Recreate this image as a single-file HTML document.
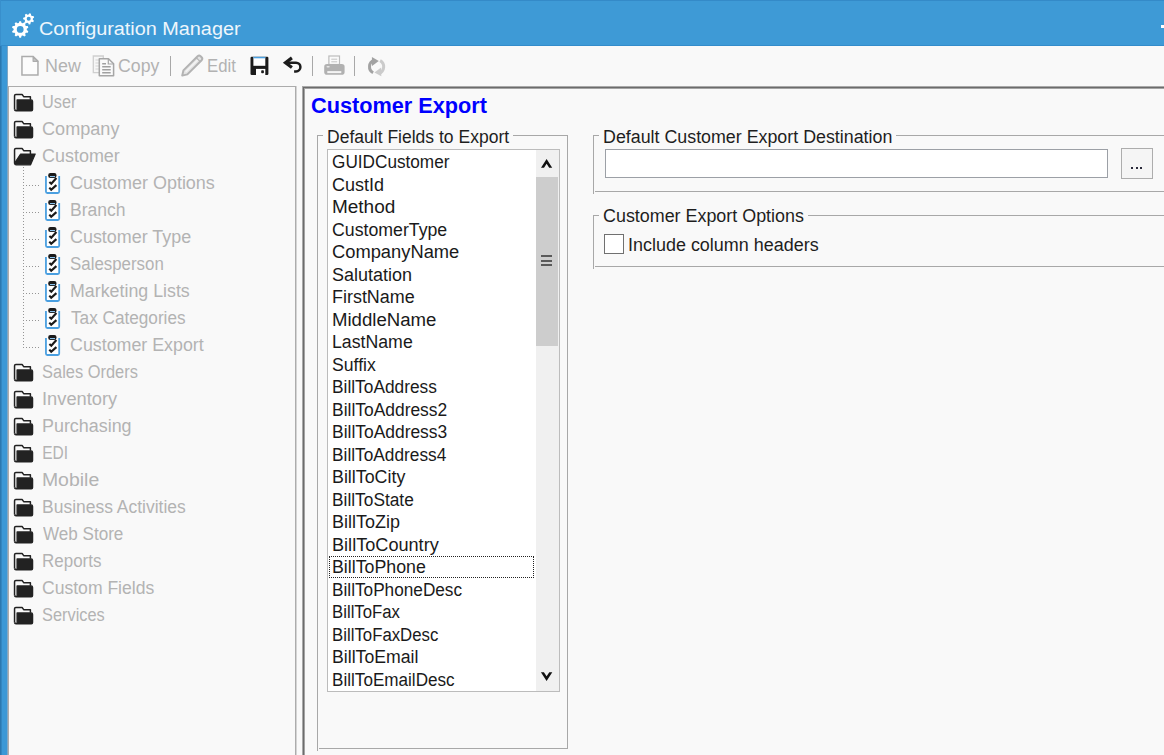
<!DOCTYPE html>
<html><head><meta charset="utf-8">
<style>
*{margin:0;padding:0;box-sizing:border-box}
html,body{width:1164px;height:755px;overflow:hidden;background:#f9f9f9;font-family:"Liberation Sans",sans-serif;position:relative}
.a{position:absolute;display:block}
.t{position:absolute;white-space:nowrap;line-height:30px;height:30px}
</style></head><body>
<div class="a" style="left:0;top:0;width:1164px;height:46px;background:#3e9ad6"></div>
<div class="a" style="left:0;top:0;width:1164px;height:1px;background:#348ac8"></div>
<div class="a" style="left:0;top:0;width:1px;height:46px;background:#388fcc"></div>
<div class="a" style="left:0;top:45px;width:1164px;height:1px;background:#338ccb"></div>
<svg class="a" style="left:0;top:0" width="40" height="46"><path fill="#fff" fill-rule="evenodd" d="M26.77,30.06 L28.31,31.16 L27.80,32.74 L25.90,32.72 L25.13,33.79 L25.73,35.59 L24.38,36.57 L22.86,35.44 L21.60,35.85 L21.04,37.66 L19.37,37.66 L18.80,35.85 L17.54,35.44 L16.02,36.57 L14.68,35.59 L15.28,33.80 L14.50,32.73 L12.61,32.75 L12.09,31.16 L13.63,30.07 L13.63,28.74 L12.09,27.64 L12.60,26.06 L14.50,26.08 L15.27,25.01 L14.67,23.21 L16.02,22.23 L17.54,23.36 L18.80,22.95 L19.36,21.14 L21.03,21.14 L21.60,22.95 L22.86,23.36 L24.38,22.23 L25.72,23.21 L25.12,25.00 L25.90,26.07 L27.79,26.05 L28.31,27.64 L26.77,28.73Z M23.60,29.40 A3.4,3.4 0 1 0 16.80,29.40 A3.4,3.4 0 1 0 23.60,29.40Z M32.82,19.63 L33.94,20.78 L33.16,22.18 L31.59,21.84 L30.61,22.54 L30.42,24.13 L28.84,24.40 L28.13,22.96 L26.97,22.63 L25.60,23.47 L24.41,22.40 L25.09,20.95 L24.63,19.83 L23.12,19.29 L23.21,17.69 L24.77,17.31 L25.35,16.26 L24.84,14.74 L26.15,13.82 L27.41,14.80 L28.60,14.60 L29.47,13.25 L31.01,13.70 L31.02,15.30 L31.92,16.10 L33.51,15.94 L34.13,17.42 L32.88,18.43Z M30.70,18.80 A2.0,2.0 0 1 0 26.70,18.80 A2.0,2.0 0 1 0 30.70,18.80Z"/></svg>
<div class="a" style="left:1161px;top:25px;width:3px;height:3px;background:#fff"></div>
<div class="a" style="left:0;top:46px;width:7px;height:709px;background:#3b98d6"></div>
<div class="a" style="left:0;top:46px;width:1px;height:709px;background:#2a78b0"></div>
<div class="a" style="left:1px;top:46px;width:1px;height:709px;background:#3386c0"></div>
<div class="a" style="left:7px;top:46px;width:1157px;height:39px;background:#f9f9f9"></div>
<svg class="a" style="left:20px;top:55px" width="21" height="23" viewBox="0 0 21 23">
<path d="M1.95,1.55 H13.1 L17.95,6.3 V20.05 H1.95 Z" fill="#fcfcfc" stroke="#acacac" stroke-width="1.5" stroke-linejoin="miter"/>
<path d="M13.1,1.6 V6.3 H17.9 Z" fill="#c4c4c4" stroke="#acacac" stroke-width="1.2" stroke-linejoin="round"/>
</svg>
<svg class="a" style="left:92px;top:55px" width="24" height="23" viewBox="0 0 24 23">
<path d="M1.3,1 H11.3 V17.7 H1.3 Z" fill="#f6f6f6" stroke="#cfcfcf" stroke-width="1.3"/>
<path d="M3.5,5 H8 M3.5,8 H8 M3.5,11 H8 M3.5,14 H8" stroke="#d4d4d4" stroke-width="1.2"/>
<path d="M7.3,3.7 H16.5 L21.6,8.8 V20.8 H7.3 Z" fill="#fafafa" stroke="#a6a6a6" stroke-width="1.5" stroke-linejoin="round"/>
<path d="M16.3,3.9 V9 H21.4" fill="none" stroke="#a6a6a6" stroke-width="1.2"/>
<path d="M10.2,8.8 H14 M10.2,11.8 H18.7 M10.2,14.7 H18.7 M10.2,17.7 H18.7" stroke="#a0a0a0" stroke-width="1.4"/>
</svg>
<div class="a" style="left:170px;top:56px;width:1px;height:20px;background:#a8a8a8"></div>
<svg class="a" style="left:180px;top:54px" width="24" height="24" viewBox="0 0 24 24">
<path d="M2.2,21.6 L3.4,16.4 L17.6,2.2 Q19.1,0.8 20.6,2.2 L21.6,3.2 Q23.0,4.7 21.6,6.2 L7.4,20.4 Z" fill="#e4e4e4" stroke="#b3b3b3" stroke-width="2.0" stroke-linejoin="round"/>
<path d="M5.8,17.8 L18.4,5.2" stroke="#f4f4f4" stroke-width="1.6"/>
<path d="M16.2,3.6 L20.2,7.6" stroke="#b3b3b3" stroke-width="1.2"/>
</svg>
<svg class="a" style="left:250px;top:56px" width="20" height="20" viewBox="0 0 20 20">
<rect x="0.5" y="0.8" width="17.9" height="18.1" rx="1.2" fill="#1c1c1c"/>
<rect x="3.4" y="0.8" width="11.9" height="9.0" fill="#ffffff"/>
<rect x="3.4" y="0.8" width="11.9" height="1.5" fill="#4aa0e0"/>
<rect x="6.0" y="12.9" width="9.3" height="6.1" fill="#ffffff"/>
<rect x="11.2" y="14.3" width="2.7" height="3.0" rx="0.8" fill="#1c1c1c"/>
</svg>
<svg class="a" style="left:282px;top:55px" width="22" height="20" viewBox="0 0 22 20">
<path d="M4.0,7.7 H14 A4.4,4.4 0 0 1 14,16.5 H12.1" fill="none" stroke="#1c1c1c" stroke-width="2.5"/>
<path d="M9.9,2.9 L3.5,7.7 L9.9,12.6" fill="none" stroke="#1c1c1c" stroke-width="3.2" stroke-linejoin="miter" stroke-miterlimit="3"/>
</svg>
<div class="a" style="left:312px;top:56px;width:1px;height:20px;background:#a8a8a8"></div>
<svg class="a" style="left:322px;top:54px" width="25" height="23" viewBox="0 0 25 23">
<rect x="6.9" y="2.0" width="10.6" height="8.5" fill="#fafafa" stroke="#bcbcbc" stroke-width="1.2"/>
<path d="M9.3,5.2 H15.2 M9.3,7.8 H15.2" stroke="#c2c2c2" stroke-width="1.0"/>
<rect x="2.2" y="10.1" width="20.4" height="10.6" rx="2.8" fill="#b1b1b1"/>
<rect x="5.3" y="17.1" width="14.0" height="2.0" fill="#f4f4f4"/>
<rect x="4.5" y="12.0" width="3.2" height="1.5" rx="0.7" fill="#e4e4e4"/>
</svg>
<div class="a" style="left:354px;top:56px;width:1px;height:20px;background:#a8a8a8"></div>
<svg class="a" style="left:365px;top:55px" width="23" height="23" viewBox="0 0 23 23">
<g><path d="M8.1,17.8 A7,7 0 0 1 9.2,5.1" fill="none" stroke="#a2a2a2" stroke-width="3"/>
<path d="M13.8,5.9 L6.9,2.1 L7.0,10.9 Z" fill="#a2a2a2"/></g>
<g transform="rotate(180 11.6 11.7)"><path d="M8.1,17.8 A7,7 0 0 1 9.2,5.1" fill="none" stroke="#cbcbcb" stroke-width="3"/>
<path d="M13.8,5.9 L6.9,2.1 L7.0,10.9 Z" fill="#cbcbcb"/></g>
</svg>
<div class="a" style="left:8px;top:86px;width:288px;height:680px;background:#f9f9f9;border:1px solid #acacac"></div>
<div class="a" style="left:296px;top:86px;width:1px;height:680px;background:#d4d4d4"></div>
<div class="a" style="left:7px;top:46px;width:1px;height:709px;background:#7ea6c4"></div>
<svg class="a" style="left:13px;top:92.5px" width="21" height="20" viewBox="0 0 21 20">
<path d="M1.55,16.6 V2.8 Q1.55,1.55 2.8,1.55 H9.1 L10.9,3.85 H17.4 V6.8" fill="none" stroke="#222" stroke-width="1.5" stroke-linejoin="round"/>
<path d="M1.55,16.4 Q1.55,17.9 3.0,17.9 H18.4 Q19.6,17.9 19.6,16.6 V8.4 Q19.6,6.9 18.2,6.9 H4.1 V16.6" fill="#222" stroke="#222" stroke-width="1.3" stroke-linejoin="round"/>
</svg>
<svg class="a" style="left:13px;top:119.5px" width="21" height="20" viewBox="0 0 21 20">
<path d="M1.55,16.6 V2.8 Q1.55,1.55 2.8,1.55 H9.1 L10.9,3.85 H17.4 V6.8" fill="none" stroke="#222" stroke-width="1.5" stroke-linejoin="round"/>
<path d="M1.55,16.4 Q1.55,17.9 3.0,17.9 H18.4 Q19.6,17.9 19.6,16.6 V8.4 Q19.6,6.9 18.2,6.9 H4.1 V16.6" fill="#222" stroke="#222" stroke-width="1.3" stroke-linejoin="round"/>
</svg>
<svg class="a" style="left:13px;top:146.5px" width="23" height="20" viewBox="0 0 23 20">
<path d="M1.55,16.6 V2.8 Q1.55,1.55 2.8,1.55 H9.1 L10.9,3.85 H17.4 V7" fill="none" stroke="#222" stroke-width="1.5" stroke-linejoin="round"/>
<path d="M1.6,16.2 Q1.6,17.8 3.1,17.8 H17.6 L22.2,7.0 H7.6 Z" fill="#222" stroke="#222" stroke-width="1.2" stroke-linejoin="round"/>
</svg>
<svg class="a" style="left:44px;top:172px" width="18" height="23" viewBox="0 0 18 23">
<path d="M1.95,3.9 V19.6 Q1.95,21.0 3.3,21.0 H13.9 Q15.2,21.0 15.2,19.6 V3.9" fill="#fff" stroke="#4a9fe0" stroke-width="1.8"/>
<rect x="4.2" y="1.1" width="8.3" height="4.8" rx="2.2" fill="#1a1a1a"/>
<rect x="6" y="4.0" width="5" height="1.1" fill="#8ac2ec"/>
<path d="M5.4,10.0 L7.3,11.8 L12.4,6.0" fill="none" stroke="#1a1a1a" stroke-width="2.1"/>
<path d="M5.3,15.6 L7.2,17.8 L12.4,13.1" fill="none" stroke="#1a1a1a" stroke-width="2.1"/>
</svg>
<div class="a" style="left:23px;top:185px;width:16px;height:1px;background:repeating-linear-gradient(90deg,#959595 0 1px,transparent 1px 3px)"></div>
<svg class="a" style="left:44px;top:199px" width="18" height="23" viewBox="0 0 18 23">
<path d="M1.95,3.9 V19.6 Q1.95,21.0 3.3,21.0 H13.9 Q15.2,21.0 15.2,19.6 V3.9" fill="#fff" stroke="#4a9fe0" stroke-width="1.8"/>
<rect x="4.2" y="1.1" width="8.3" height="4.8" rx="2.2" fill="#1a1a1a"/>
<rect x="6" y="4.0" width="5" height="1.1" fill="#8ac2ec"/>
<path d="M5.4,10.0 L7.3,11.8 L12.4,6.0" fill="none" stroke="#1a1a1a" stroke-width="2.1"/>
<path d="M5.3,15.6 L7.2,17.8 L12.4,13.1" fill="none" stroke="#1a1a1a" stroke-width="2.1"/>
</svg>
<div class="a" style="left:23px;top:212px;width:16px;height:1px;background:repeating-linear-gradient(90deg,#959595 0 1px,transparent 1px 3px)"></div>
<svg class="a" style="left:44px;top:226px" width="18" height="23" viewBox="0 0 18 23">
<path d="M1.95,3.9 V19.6 Q1.95,21.0 3.3,21.0 H13.9 Q15.2,21.0 15.2,19.6 V3.9" fill="#fff" stroke="#4a9fe0" stroke-width="1.8"/>
<rect x="4.2" y="1.1" width="8.3" height="4.8" rx="2.2" fill="#1a1a1a"/>
<rect x="6" y="4.0" width="5" height="1.1" fill="#8ac2ec"/>
<path d="M5.4,10.0 L7.3,11.8 L12.4,6.0" fill="none" stroke="#1a1a1a" stroke-width="2.1"/>
<path d="M5.3,15.6 L7.2,17.8 L12.4,13.1" fill="none" stroke="#1a1a1a" stroke-width="2.1"/>
</svg>
<div class="a" style="left:23px;top:239px;width:16px;height:1px;background:repeating-linear-gradient(90deg,#959595 0 1px,transparent 1px 3px)"></div>
<svg class="a" style="left:44px;top:253px" width="18" height="23" viewBox="0 0 18 23">
<path d="M1.95,3.9 V19.6 Q1.95,21.0 3.3,21.0 H13.9 Q15.2,21.0 15.2,19.6 V3.9" fill="#fff" stroke="#4a9fe0" stroke-width="1.8"/>
<rect x="4.2" y="1.1" width="8.3" height="4.8" rx="2.2" fill="#1a1a1a"/>
<rect x="6" y="4.0" width="5" height="1.1" fill="#8ac2ec"/>
<path d="M5.4,10.0 L7.3,11.8 L12.4,6.0" fill="none" stroke="#1a1a1a" stroke-width="2.1"/>
<path d="M5.3,15.6 L7.2,17.8 L12.4,13.1" fill="none" stroke="#1a1a1a" stroke-width="2.1"/>
</svg>
<div class="a" style="left:23px;top:266px;width:16px;height:1px;background:repeating-linear-gradient(90deg,#959595 0 1px,transparent 1px 3px)"></div>
<svg class="a" style="left:44px;top:280px" width="18" height="23" viewBox="0 0 18 23">
<path d="M1.95,3.9 V19.6 Q1.95,21.0 3.3,21.0 H13.9 Q15.2,21.0 15.2,19.6 V3.9" fill="#fff" stroke="#4a9fe0" stroke-width="1.8"/>
<rect x="4.2" y="1.1" width="8.3" height="4.8" rx="2.2" fill="#1a1a1a"/>
<rect x="6" y="4.0" width="5" height="1.1" fill="#8ac2ec"/>
<path d="M5.4,10.0 L7.3,11.8 L12.4,6.0" fill="none" stroke="#1a1a1a" stroke-width="2.1"/>
<path d="M5.3,15.6 L7.2,17.8 L12.4,13.1" fill="none" stroke="#1a1a1a" stroke-width="2.1"/>
</svg>
<div class="a" style="left:23px;top:293px;width:16px;height:1px;background:repeating-linear-gradient(90deg,#959595 0 1px,transparent 1px 3px)"></div>
<svg class="a" style="left:44px;top:307px" width="18" height="23" viewBox="0 0 18 23">
<path d="M1.95,3.9 V19.6 Q1.95,21.0 3.3,21.0 H13.9 Q15.2,21.0 15.2,19.6 V3.9" fill="#fff" stroke="#4a9fe0" stroke-width="1.8"/>
<rect x="4.2" y="1.1" width="8.3" height="4.8" rx="2.2" fill="#1a1a1a"/>
<rect x="6" y="4.0" width="5" height="1.1" fill="#8ac2ec"/>
<path d="M5.4,10.0 L7.3,11.8 L12.4,6.0" fill="none" stroke="#1a1a1a" stroke-width="2.1"/>
<path d="M5.3,15.6 L7.2,17.8 L12.4,13.1" fill="none" stroke="#1a1a1a" stroke-width="2.1"/>
</svg>
<div class="a" style="left:23px;top:320px;width:16px;height:1px;background:repeating-linear-gradient(90deg,#959595 0 1px,transparent 1px 3px)"></div>
<svg class="a" style="left:44px;top:334px" width="18" height="23" viewBox="0 0 18 23">
<path d="M1.95,3.9 V19.6 Q1.95,21.0 3.3,21.0 H13.9 Q15.2,21.0 15.2,19.6 V3.9" fill="#fff" stroke="#4a9fe0" stroke-width="1.8"/>
<rect x="4.2" y="1.1" width="8.3" height="4.8" rx="2.2" fill="#1a1a1a"/>
<rect x="6" y="4.0" width="5" height="1.1" fill="#8ac2ec"/>
<path d="M5.4,10.0 L7.3,11.8 L12.4,6.0" fill="none" stroke="#1a1a1a" stroke-width="2.1"/>
<path d="M5.3,15.6 L7.2,17.8 L12.4,13.1" fill="none" stroke="#1a1a1a" stroke-width="2.1"/>
</svg>
<div class="a" style="left:23px;top:347px;width:16px;height:1px;background:repeating-linear-gradient(90deg,#959595 0 1px,transparent 1px 3px)"></div>
<svg class="a" style="left:13px;top:362.5px" width="21" height="20" viewBox="0 0 21 20">
<path d="M1.55,16.6 V2.8 Q1.55,1.55 2.8,1.55 H9.1 L10.9,3.85 H17.4 V6.8" fill="none" stroke="#222" stroke-width="1.5" stroke-linejoin="round"/>
<path d="M1.55,16.4 Q1.55,17.9 3.0,17.9 H18.4 Q19.6,17.9 19.6,16.6 V8.4 Q19.6,6.9 18.2,6.9 H4.1 V16.6" fill="#222" stroke="#222" stroke-width="1.3" stroke-linejoin="round"/>
</svg>
<svg class="a" style="left:13px;top:389.5px" width="21" height="20" viewBox="0 0 21 20">
<path d="M1.55,16.6 V2.8 Q1.55,1.55 2.8,1.55 H9.1 L10.9,3.85 H17.4 V6.8" fill="none" stroke="#222" stroke-width="1.5" stroke-linejoin="round"/>
<path d="M1.55,16.4 Q1.55,17.9 3.0,17.9 H18.4 Q19.6,17.9 19.6,16.6 V8.4 Q19.6,6.9 18.2,6.9 H4.1 V16.6" fill="#222" stroke="#222" stroke-width="1.3" stroke-linejoin="round"/>
</svg>
<svg class="a" style="left:13px;top:416.5px" width="21" height="20" viewBox="0 0 21 20">
<path d="M1.55,16.6 V2.8 Q1.55,1.55 2.8,1.55 H9.1 L10.9,3.85 H17.4 V6.8" fill="none" stroke="#222" stroke-width="1.5" stroke-linejoin="round"/>
<path d="M1.55,16.4 Q1.55,17.9 3.0,17.9 H18.4 Q19.6,17.9 19.6,16.6 V8.4 Q19.6,6.9 18.2,6.9 H4.1 V16.6" fill="#222" stroke="#222" stroke-width="1.3" stroke-linejoin="round"/>
</svg>
<svg class="a" style="left:13px;top:443.5px" width="21" height="20" viewBox="0 0 21 20">
<path d="M1.55,16.6 V2.8 Q1.55,1.55 2.8,1.55 H9.1 L10.9,3.85 H17.4 V6.8" fill="none" stroke="#222" stroke-width="1.5" stroke-linejoin="round"/>
<path d="M1.55,16.4 Q1.55,17.9 3.0,17.9 H18.4 Q19.6,17.9 19.6,16.6 V8.4 Q19.6,6.9 18.2,6.9 H4.1 V16.6" fill="#222" stroke="#222" stroke-width="1.3" stroke-linejoin="round"/>
</svg>
<svg class="a" style="left:13px;top:470.5px" width="21" height="20" viewBox="0 0 21 20">
<path d="M1.55,16.6 V2.8 Q1.55,1.55 2.8,1.55 H9.1 L10.9,3.85 H17.4 V6.8" fill="none" stroke="#222" stroke-width="1.5" stroke-linejoin="round"/>
<path d="M1.55,16.4 Q1.55,17.9 3.0,17.9 H18.4 Q19.6,17.9 19.6,16.6 V8.4 Q19.6,6.9 18.2,6.9 H4.1 V16.6" fill="#222" stroke="#222" stroke-width="1.3" stroke-linejoin="round"/>
</svg>
<svg class="a" style="left:13px;top:497.5px" width="21" height="20" viewBox="0 0 21 20">
<path d="M1.55,16.6 V2.8 Q1.55,1.55 2.8,1.55 H9.1 L10.9,3.85 H17.4 V6.8" fill="none" stroke="#222" stroke-width="1.5" stroke-linejoin="round"/>
<path d="M1.55,16.4 Q1.55,17.9 3.0,17.9 H18.4 Q19.6,17.9 19.6,16.6 V8.4 Q19.6,6.9 18.2,6.9 H4.1 V16.6" fill="#222" stroke="#222" stroke-width="1.3" stroke-linejoin="round"/>
</svg>
<svg class="a" style="left:13px;top:524.5px" width="21" height="20" viewBox="0 0 21 20">
<path d="M1.55,16.6 V2.8 Q1.55,1.55 2.8,1.55 H9.1 L10.9,3.85 H17.4 V6.8" fill="none" stroke="#222" stroke-width="1.5" stroke-linejoin="round"/>
<path d="M1.55,16.4 Q1.55,17.9 3.0,17.9 H18.4 Q19.6,17.9 19.6,16.6 V8.4 Q19.6,6.9 18.2,6.9 H4.1 V16.6" fill="#222" stroke="#222" stroke-width="1.3" stroke-linejoin="round"/>
</svg>
<svg class="a" style="left:13px;top:551.5px" width="21" height="20" viewBox="0 0 21 20">
<path d="M1.55,16.6 V2.8 Q1.55,1.55 2.8,1.55 H9.1 L10.9,3.85 H17.4 V6.8" fill="none" stroke="#222" stroke-width="1.5" stroke-linejoin="round"/>
<path d="M1.55,16.4 Q1.55,17.9 3.0,17.9 H18.4 Q19.6,17.9 19.6,16.6 V8.4 Q19.6,6.9 18.2,6.9 H4.1 V16.6" fill="#222" stroke="#222" stroke-width="1.3" stroke-linejoin="round"/>
</svg>
<svg class="a" style="left:13px;top:578.5px" width="21" height="20" viewBox="0 0 21 20">
<path d="M1.55,16.6 V2.8 Q1.55,1.55 2.8,1.55 H9.1 L10.9,3.85 H17.4 V6.8" fill="none" stroke="#222" stroke-width="1.5" stroke-linejoin="round"/>
<path d="M1.55,16.4 Q1.55,17.9 3.0,17.9 H18.4 Q19.6,17.9 19.6,16.6 V8.4 Q19.6,6.9 18.2,6.9 H4.1 V16.6" fill="#222" stroke="#222" stroke-width="1.3" stroke-linejoin="round"/>
</svg>
<svg class="a" style="left:13px;top:605.5px" width="21" height="20" viewBox="0 0 21 20">
<path d="M1.55,16.6 V2.8 Q1.55,1.55 2.8,1.55 H9.1 L10.9,3.85 H17.4 V6.8" fill="none" stroke="#222" stroke-width="1.5" stroke-linejoin="round"/>
<path d="M1.55,16.4 Q1.55,17.9 3.0,17.9 H18.4 Q19.6,17.9 19.6,16.6 V8.4 Q19.6,6.9 18.2,6.9 H4.1 V16.6" fill="#222" stroke="#222" stroke-width="1.3" stroke-linejoin="round"/>
</svg>
<div class="a" style="left:23px;top:167px;width:1px;height:180px;background:repeating-linear-gradient(180deg,#959595 0 1px,transparent 1px 3px)"></div>
<div class="a" style="left:302px;top:86px;width:870px;height:680px;background:#f9f9f9;border-left:1px solid #a9a9a9;border-top:1px solid #a9a9a9"></div>
<div class="a" style="left:303px;top:87px;width:870px;height:680px;border-left:1px solid #6c6c6c;border-top:1px solid #6c6c6c"></div>
<div class="a" style="left:304px;top:88px;width:870px;height:680px;border-left:1px solid #a4a4a4;border-top:1px solid #a4a4a4"></div>
<div class="a" style="left:317px;top:135px;width:1px;height:616px;background:#a8a8a8"></div>
<div class="a" style="left:567px;top:135px;width:1px;height:614px;background:#a8a8a8"></div>
<div class="a" style="left:319px;top:748px;width:249px;height:1px;background:#a8a8a8"></div>
<div class="a" style="left:317px;top:135px;width:6px;height:1px;background:#a8a8a8"></div>
<div class="a" style="left:513px;top:135px;width:55px;height:1px;background:#a8a8a8"></div>
<div class="a" style="left:327px;top:149px;width:233px;height:543px;background:#fff;border:1px solid #bcbcbc"></div>
<div class="a" style="left:536px;top:150px;width:23px;height:541px;background:#f0f0f0"></div>
<div class="a" style="left:536px;top:177px;width:22px;height:169px;background:#cdcdcd"></div>
<svg class="a" style="left:536px;top:150px" width="24" height="30" viewBox="0 0 24 30">
<path d="M5.0,17.7 L10.6,9.0 L16.2,17.7 L13.2,17.7 L10.6,13.7 L8.0,17.7 Z" fill="#111"/></svg>
<svg class="a" style="left:536px;top:660px" width="24" height="30" viewBox="0 0 24 30">
<path d="M4.9,12.3 L7.9,12.3 L10.6,16.3 L13.3,12.3 L16.3,12.3 L10.6,21.1 Z" fill="#111"/></svg>
<div class="a" style="left:541px;top:255px;width:11px;height:2px;background:#5a5a5a"></div>
<div class="a" style="left:541px;top:259.5px;width:11px;height:2px;background:#5a5a5a"></div>
<div class="a" style="left:541px;top:264px;width:11px;height:2px;background:#5a5a5a"></div>
<div class="a" style="left:328.5px;top:556px;width:205.5px;height:22px;border:1px dotted #222"></div>
<div class="a" style="left:593px;top:135px;width:1px;height:59px;background:#a8a8a8"></div>
<div class="a" style="left:1192px;top:135px;width:1px;height:57px;background:#a8a8a8"></div>
<div class="a" style="left:595px;top:191px;width:598px;height:1px;background:#a8a8a8"></div>
<div class="a" style="left:593px;top:135px;width:6px;height:1px;background:#a8a8a8"></div>
<div class="a" style="left:896px;top:135px;width:297px;height:1px;background:#a8a8a8"></div>
<div class="a" style="left:605px;top:149px;width:503px;height:29px;background:#fff;border:1px solid #9ca0a6"></div>
<div class="a" style="left:1121px;top:148px;width:32px;height:31px;background:#f5f5f5;border:1px solid #adadad"></div>
<div class="a" style="left:1131.0px;top:167px;width:2px;height:2.4px;background:#2a2a3a"></div>
<div class="a" style="left:1135.6px;top:167px;width:2px;height:2.4px;background:#2a2a3a"></div>
<div class="a" style="left:1140.2px;top:167px;width:2px;height:2.4px;background:#2a2a3a"></div>
<div class="a" style="left:593px;top:215px;width:1px;height:54px;background:#a8a8a8"></div>
<div class="a" style="left:1192px;top:215px;width:1px;height:52px;background:#a8a8a8"></div>
<div class="a" style="left:595px;top:266px;width:598px;height:1px;background:#a8a8a8"></div>
<div class="a" style="left:593px;top:215px;width:6px;height:1px;background:#a8a8a8"></div>
<div class="a" style="left:808px;top:215px;width:385px;height:1px;background:#a8a8a8"></div>
<div class="a" style="left:604.3px;top:234.2px;width:19.6px;height:19.4px;background:#fff;border:1.7px solid #707070"></div>
<div class="t" style="left:39.40px;top:13.76px;font-size:18px;font-weight:400;color:#eef6fc;transform:scaleX(1.1011);transform-origin:1px 0;">Configuration Manager</div>
<div class="t" style="left:45.00px;top:50.76px;font-size:18px;font-weight:400;color:#b2b2b2;transform:scaleX(0.9943);transform-origin:1px 0;">New</div>
<div class="t" style="left:118.30px;top:50.76px;font-size:18px;font-weight:400;color:#b2b2b2;transform:scaleX(0.9829);transform-origin:1px 0;">Copy</div>
<div class="t" style="left:207.40px;top:50.76px;font-size:18px;font-weight:400;color:#b2b2b2;transform:scaleX(0.9300);transform-origin:1px 0;">Edit</div>
<div class="t" style="left:41.80px;top:86.76px;font-size:18px;font-weight:400;color:#b3b3b3;transform:scaleX(0.9054);transform-origin:1px 0;">User</div>
<div class="t" style="left:41.80px;top:113.76px;font-size:18px;font-weight:400;color:#b3b3b3;transform:scaleX(1.0053);transform-origin:1px 0;">Company</div>
<div class="t" style="left:41.80px;top:140.76px;font-size:18px;font-weight:400;color:#b3b3b3;transform:scaleX(0.9974);transform-origin:1px 0;">Customer</div>
<div class="t" style="left:70.30px;top:167.76px;font-size:18px;font-weight:400;color:#b3b3b3;transform:scaleX(0.9986);transform-origin:1px 0;">Customer Options</div>
<div class="t" style="left:70.30px;top:194.76px;font-size:18px;font-weight:400;color:#b3b3b3;transform:scaleX(0.9745);transform-origin:1px 0;">Branch</div>
<div class="t" style="left:70.30px;top:221.76px;font-size:18px;font-weight:400;color:#b3b3b3;transform:scaleX(0.9950);transform-origin:1px 0;">Customer Type</div>
<div class="t" style="left:70.30px;top:248.76px;font-size:18px;font-weight:400;color:#b3b3b3;transform:scaleX(0.9367);transform-origin:1px 0;">Salesperson</div>
<div class="t" style="left:70.30px;top:275.76px;font-size:18px;font-weight:400;color:#b3b3b3;transform:scaleX(0.9892);transform-origin:1px 0;">Marketing Lists</div>
<div class="t" style="left:71.30px;top:302.76px;font-size:18px;font-weight:400;color:#b3b3b3;transform:scaleX(0.9542);transform-origin:0px 0;">Tax Categories</div>
<div class="t" style="left:70.30px;top:329.76px;font-size:18px;font-weight:400;color:#b3b3b3;transform:scaleX(0.9903);transform-origin:1px 0;">Customer Export</div>
<div class="t" style="left:41.80px;top:356.76px;font-size:18px;font-weight:400;color:#b3b3b3;transform:scaleX(0.9125);transform-origin:1px 0;">Sales Orders</div>
<div class="t" style="left:41.80px;top:383.76px;font-size:18px;font-weight:400;color:#b3b3b3;transform:scaleX(1.0164);transform-origin:1px 0;">Inventory</div>
<div class="t" style="left:41.80px;top:410.76px;font-size:18px;font-weight:400;color:#b3b3b3;transform:scaleX(0.9943);transform-origin:1px 0;">Purchasing</div>
<div class="t" style="left:41.80px;top:437.76px;font-size:18px;font-weight:400;color:#b3b3b3;transform:scaleX(0.8607);transform-origin:1px 0;">EDI</div>
<div class="t" style="left:41.80px;top:464.76px;font-size:18px;font-weight:400;color:#b3b3b3;transform:scaleX(1.0804);transform-origin:1px 0;">Mobile</div>
<div class="t" style="left:41.80px;top:491.76px;font-size:18px;font-weight:400;color:#b3b3b3;transform:scaleX(0.9707);transform-origin:1px 0;">Business Activities</div>
<div class="t" style="left:42.80px;top:518.76px;font-size:18px;font-weight:400;color:#b3b3b3;transform:scaleX(0.9488);transform-origin:0px 0;">Web Store</div>
<div class="t" style="left:41.80px;top:545.76px;font-size:18px;font-weight:400;color:#b3b3b3;transform:scaleX(0.9419);transform-origin:1px 0;">Reports</div>
<div class="t" style="left:41.80px;top:572.76px;font-size:18px;font-weight:400;color:#b3b3b3;transform:scaleX(0.9754);transform-origin:1px 0;">Custom Fields</div>
<div class="t" style="left:41.80px;top:599.76px;font-size:18px;font-weight:400;color:#b3b3b3;transform:scaleX(0.9074);transform-origin:1px 0;">Services</div>
<div class="t" style="left:310.50px;top:91.38px;font-size:22px;font-weight:700;color:#0000ff;transform:scaleX(0.9860);transform-origin:1px 0;">Customer Export</div>
<div class="t" style="left:327.10px;top:121.76px;font-size:18px;font-weight:400;color:#1e1e1e;transform:scaleX(0.9731);transform-origin:1px 0;">Default Fields to Export</div>
<div class="t" style="left:331.90px;top:146.76px;font-size:18px;font-weight:400;color:#1a1a1a;transform:scaleX(0.9541);transform-origin:1px 0;">GUIDCustomer</div>
<div class="t" style="left:331.90px;top:169.76px;font-size:18px;font-weight:400;color:#1a1a1a;transform:scaleX(1.0000);transform-origin:1px 0;">CustId</div>
<div class="t" style="left:331.90px;top:191.76px;font-size:18px;font-weight:400;color:#1a1a1a;transform:scaleX(1.0552);transform-origin:1px 0;">Method</div>
<div class="t" style="left:331.90px;top:214.76px;font-size:18px;font-weight:400;color:#1a1a1a;transform:scaleX(0.9843);transform-origin:1px 0;">CustomerType</div>
<div class="t" style="left:331.90px;top:236.76px;font-size:18px;font-weight:400;color:#1a1a1a;transform:scaleX(1.0179);transform-origin:1px 0;">CompanyName</div>
<div class="t" style="left:331.90px;top:259.76px;font-size:18px;font-weight:400;color:#1a1a1a;transform:scaleX(0.9987);transform-origin:1px 0;">Salutation</div>
<div class="t" style="left:331.90px;top:281.76px;font-size:18px;font-weight:400;color:#1a1a1a;transform:scaleX(0.9963);transform-origin:1px 0;">FirstName</div>
<div class="t" style="left:331.90px;top:304.76px;font-size:18px;font-weight:400;color:#1a1a1a;transform:scaleX(1.0343);transform-origin:1px 0;">MiddleName</div>
<div class="t" style="left:331.90px;top:326.76px;font-size:18px;font-weight:400;color:#1a1a1a;transform:scaleX(0.9838);transform-origin:1px 0;">LastName</div>
<div class="t" style="left:331.90px;top:349.76px;font-size:18px;font-weight:400;color:#1a1a1a;transform:scaleX(0.9795);transform-origin:1px 0;">Suffix</div>
<div class="t" style="left:331.90px;top:371.76px;font-size:18px;font-weight:400;color:#1a1a1a;transform:scaleX(0.9611);transform-origin:1px 0;">BillToAddress</div>
<div class="t" style="left:331.90px;top:394.76px;font-size:18px;font-weight:400;color:#1a1a1a;transform:scaleX(0.9675);transform-origin:1px 0;">BillToAddress2</div>
<div class="t" style="left:331.90px;top:416.76px;font-size:18px;font-weight:400;color:#1a1a1a;transform:scaleX(0.9675);transform-origin:1px 0;">BillToAddress3</div>
<div class="t" style="left:331.90px;top:439.76px;font-size:18px;font-weight:400;color:#1a1a1a;transform:scaleX(0.9593);transform-origin:1px 0;">BillToAddress4</div>
<div class="t" style="left:331.90px;top:461.76px;font-size:18px;font-weight:400;color:#1a1a1a;transform:scaleX(0.9904);transform-origin:1px 0;">BillToCity</div>
<div class="t" style="left:331.90px;top:484.76px;font-size:18px;font-weight:400;color:#1a1a1a;transform:scaleX(0.9614);transform-origin:1px 0;">BillToState</div>
<div class="t" style="left:331.90px;top:506.76px;font-size:18px;font-weight:400;color:#1a1a1a;transform:scaleX(0.9985);transform-origin:1px 0;">BillToZip</div>
<div class="t" style="left:331.90px;top:529.76px;font-size:18px;font-weight:400;color:#1a1a1a;transform:scaleX(1.0067);transform-origin:1px 0;">BillToCountry</div>
<div class="t" style="left:331.90px;top:551.76px;font-size:18px;font-weight:400;color:#1a1a1a;transform:scaleX(0.9871);transform-origin:1px 0;">BillToPhone</div>
<div class="t" style="left:331.90px;top:574.76px;font-size:18px;font-weight:400;color:#1a1a1a;transform:scaleX(0.9556);transform-origin:1px 0;">BillToPhoneDesc</div>
<div class="t" style="left:331.90px;top:596.76px;font-size:18px;font-weight:400;color:#1a1a1a;transform:scaleX(0.9292);transform-origin:1px 0;">BillToFax</div>
<div class="t" style="left:331.90px;top:619.76px;font-size:18px;font-weight:400;color:#1a1a1a;transform:scaleX(0.9319);transform-origin:1px 0;">BillToFaxDesc</div>
<div class="t" style="left:331.90px;top:641.76px;font-size:18px;font-weight:400;color:#1a1a1a;transform:scaleX(0.9814);transform-origin:1px 0;">BillToEmail</div>
<div class="t" style="left:331.90px;top:664.76px;font-size:18px;font-weight:400;color:#1a1a1a;transform:scaleX(0.9500);transform-origin:1px 0;">BillToEmailDesc</div>
<div class="t" style="left:603.10px;top:121.76px;font-size:18px;font-weight:400;color:#1e1e1e;transform:scaleX(0.9903);transform-origin:1px 0;">Default Customer Export Destination</div>
<div class="t" style="left:602.90px;top:200.76px;font-size:18px;font-weight:400;color:#1e1e1e;transform:scaleX(0.9940);transform-origin:1px 0;">Customer Export Options</div>
<div class="t" style="left:628.20px;top:229.76px;font-size:18px;font-weight:400;color:#1e1e1e;transform:scaleX(0.9974);transform-origin:1px 0;">Include column headers</div>
</body></html>
